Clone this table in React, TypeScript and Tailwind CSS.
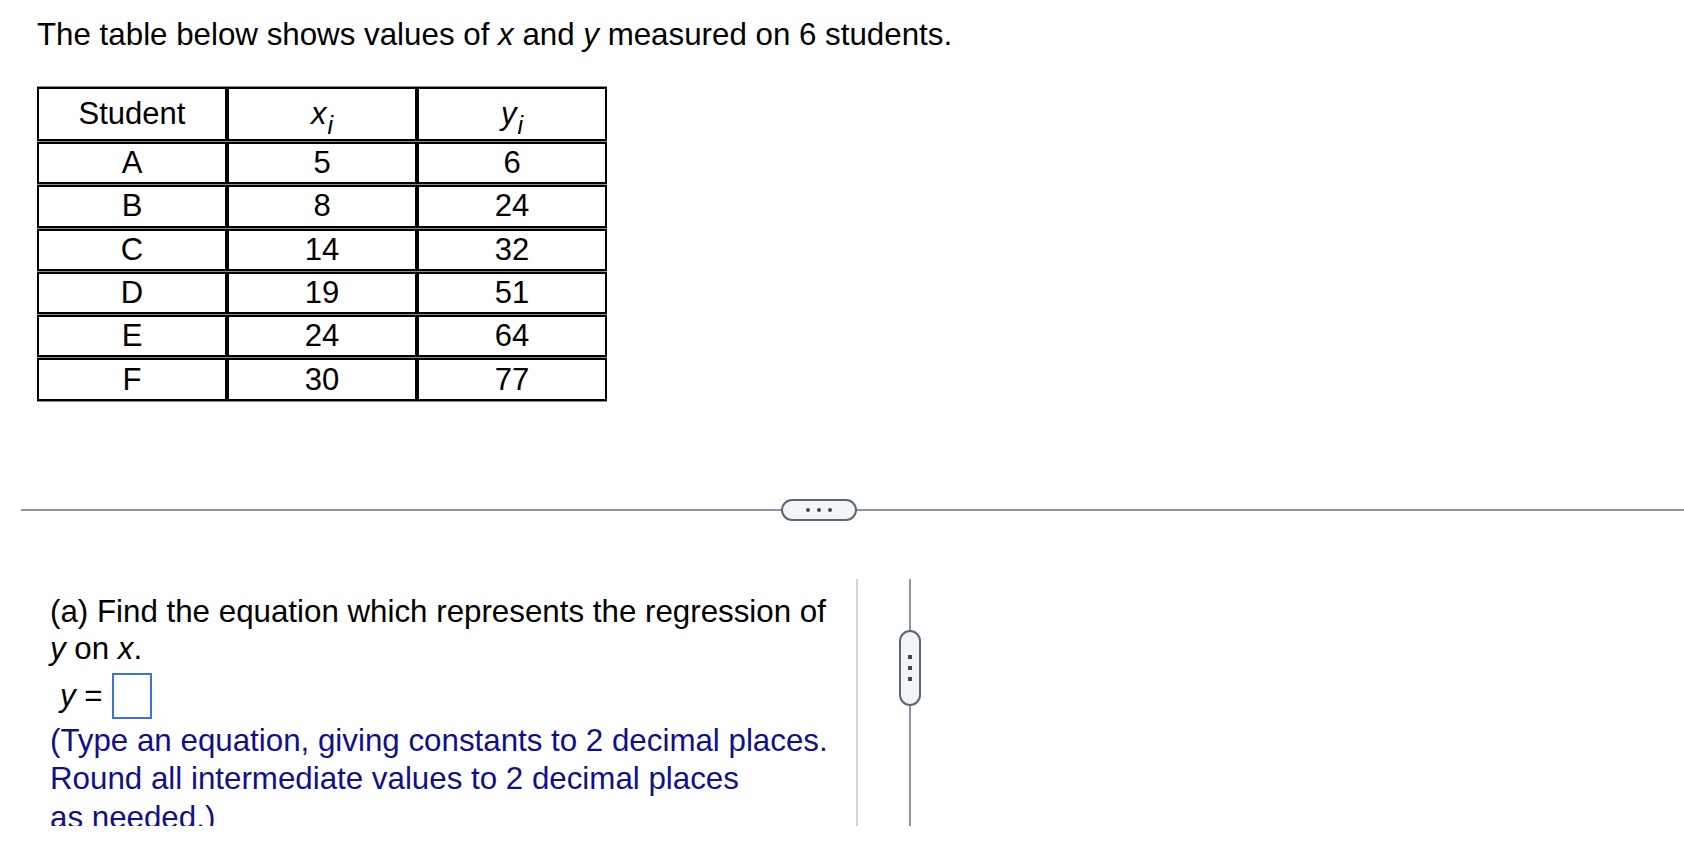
import React from "react";

const rows: [string, string, string][] = [
  ["A", "5", "6"],
  ["B", "8", "24"],
  ["C", "14", "32"],
  ["D", "19", "51"],
  ["E", "24", "64"],
  ["F", "30", "77"],
];

export default function App() {
  return (
    <div className="w-[1684px] h-[852px] bg-white overflow-hidden text-black font-['Liberation_Sans',Arial,sans-serif]">
      <div className="pl-[37px] pt-[17px]">
        <p className="text-[31.3px] leading-[36px]">
          The table below shows values of <i>x</i> and <i>y</i> measured on 6 students.
        </p>
        <table className="mt-[33px] border-separate border-spacing-x-0 border-spacing-y-[1px] bg-[#8c8c8c] text-[31px] leading-[36px]">
          <thead>
            <tr>
              <th className="w-[190px] h-[54px] border-2 border-black bg-white font-normal text-center p-0">Student</th>
              <th className="w-[190px] h-[54px] border-2 border-black bg-white font-normal text-center p-0">
                <i>x</i>
                <sub className="italic text-[25px] align-[-4px] ml-[1px]">i</sub>
              </th>
              <th className="w-[190px] h-[54px] border-2 border-black bg-white font-normal text-center p-0">
                <i>y</i>
                <sub className="italic text-[25px] align-[-4px] ml-[1px]">i</sub>
              </th>
            </tr>
          </thead>
          <tbody>
            {rows.map((r) => (
              <tr key={r[0]}>
                {r.map((c, i) => (
                  <td key={i} className="h-[42.3px] border-2 border-black bg-white text-center p-0">
                    {c}
                  </td>
                ))}
              </tr>
            ))}
          </tbody>
        </table>
      </div>

      <div className="relative mt-[97px] ml-[21px] h-[22px] flex items-center">
        <div className="h-[2px] w-full bg-[#8b95a5]" />
        <div className="absolute left-[760px] top-0 w-[76px] h-[22px] rounded-full border-2 border-[#5b6676] bg-[#f3f4f6] flex items-center justify-center gap-[7px]">
          <span className="w-[4px] h-[4px] rounded-full bg-[#3f4753]" />
          <span className="w-[4px] h-[4px] rounded-full bg-[#3f4753]" />
          <span className="w-[4px] h-[4px] rounded-full bg-[#3f4753]" />
        </div>
      </div>

      <div className="mt-[58px] flex h-[247px]">
        <div className="w-[858px] h-full overflow-hidden border-r-2 border-[#d4d4d4] pl-[50px] pt-[14px] text-[31.3px]">
          <p className="leading-[37px]">
            (a) Find the equation which represents the regression of
            <br />
            <i>y</i> on <i>x</i>.
          </p>
          <div className="mt-[6px] flex items-center pl-[10px] leading-[37px]">
            <span>
              <i>y</i> =
            </span>
            <span className="ml-[9px] w-[40px] h-[46px] border-2 border-[#3d74d8] bg-white" />
          </div>
          <p className="mt-[3px] leading-[38.5px] text-[#10108a]">
            (Type an equation, giving constants to 2 decimal places.
            <br />
            Round all intermediate values to 2 decimal places
            <br />
            as needed.)
          </p>
        </div>
        <div className="relative ml-[51px] w-[2px] h-full bg-[#8b95a5]">
          <div className="absolute left-[-10px] top-[51px] w-[22px] h-[76px] rounded-full border-2 border-[#5b6676] bg-[#f3f4f6] flex flex-col items-center justify-center gap-[7px]">
            <span className="w-[4px] h-[4px] bg-[#3f4753]" />
            <span className="w-[4px] h-[4px] bg-[#3f4753]" />
            <span className="w-[4px] h-[4px] bg-[#3f4753]" />
          </div>
        </div>
      </div>
    </div>
  );
}
